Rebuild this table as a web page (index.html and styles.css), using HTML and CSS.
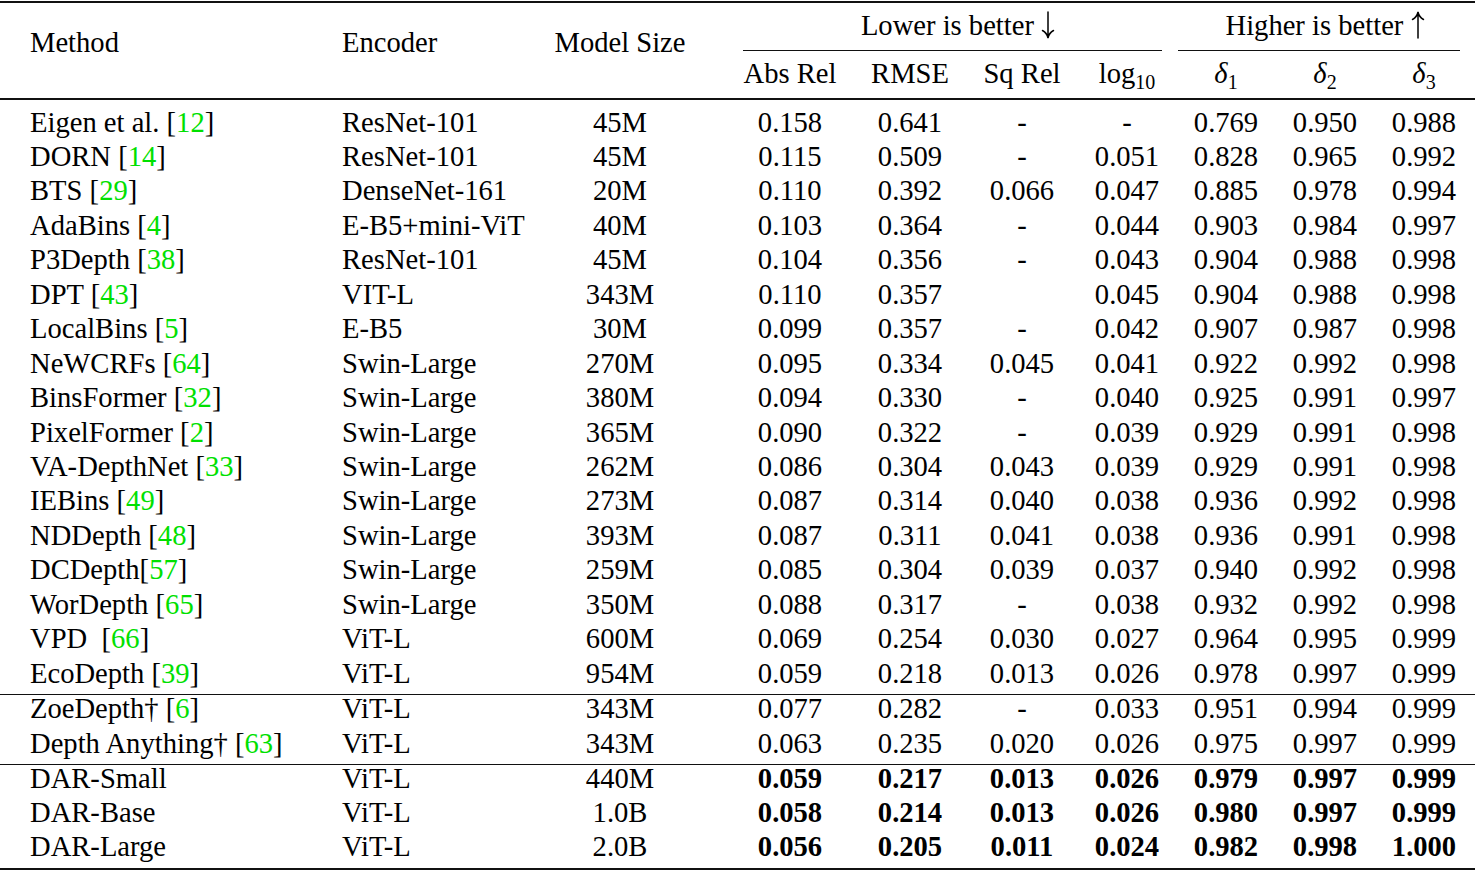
FILE: index.html
```html
<!DOCTYPE html>
<html>
<head>
<meta charset="utf-8">
<link rel="stylesheet" href="styles.css">
</head>
<body>
<div class="tbl">
  <div class="rule thick first"></div>
  <div class="head">
    <div class="hm c1">Method</div>
    <div class="hm c2">Encoder</div>
    <div class="hm c3">Model Size</div>
    <div class="grp lower">Lower is better <svg class="arrow" viewBox="0 0 14 28" width="14" height="28"><path d="M7 1V26.5M1.5 19.5Q6 22 7 27Q8 22 12.5 19.5"/></svg></div>
    <div class="cmid lower-rule"></div>
    <div class="grp higher">Higher is better <svg class="arrow" viewBox="0 0 14 28" width="14" height="28"><path d="M7 27V1.5M1.5 8.5Q6 6 7 1Q8 6 12.5 8.5"/></svg></div>
    <div class="cmid higher-rule"></div>
    <div class="sub s4">Abs Rel</div>
    <div class="sub s5">RMSE</div>
    <div class="sub s6">Sq Rel</div>
    <div class="sub s7">log<sub>10</sub></div>
    <div class="sub s8"><i>δ</i><sub>1</sub></div>
    <div class="sub s9"><i>δ</i><sub>2</sub></div>
    <div class="sub s10"><i>δ</i><sub>3</sub></div>
  </div>
  <div class="rule thick"></div>
  <div class="group g1">
    <div class="row"><div class="c1">Eigen et al. [<span class="cite">12</span>]</div><div class="c2">ResNet-101</div><div class="c3">45M</div><div class="n">0.158</div><div class="n">0.641</div><div class="n">-</div><div class="n">-</div><div class="n">0.769</div><div class="n">0.950</div><div class="n">0.988</div></div>
    <div class="row"><div class="c1">DORN [<span class="cite">14</span>]</div><div class="c2">ResNet-101</div><div class="c3">45M</div><div class="n">0.115</div><div class="n">0.509</div><div class="n">-</div><div class="n">0.051</div><div class="n">0.828</div><div class="n">0.965</div><div class="n">0.992</div></div>
    <div class="row"><div class="c1">BTS [<span class="cite">29</span>]</div><div class="c2">DenseNet-161</div><div class="c3">20M</div><div class="n">0.110</div><div class="n">0.392</div><div class="n">0.066</div><div class="n">0.047</div><div class="n">0.885</div><div class="n">0.978</div><div class="n">0.994</div></div>
    <div class="row"><div class="c1">AdaBins [<span class="cite">4</span>]</div><div class="c2">E-B5+mini-ViT</div><div class="c3">40M</div><div class="n">0.103</div><div class="n">0.364</div><div class="n">-</div><div class="n">0.044</div><div class="n">0.903</div><div class="n">0.984</div><div class="n">0.997</div></div>
    <div class="row"><div class="c1">P3Depth [<span class="cite">38</span>]</div><div class="c2">ResNet-101</div><div class="c3">45M</div><div class="n">0.104</div><div class="n">0.356</div><div class="n">-</div><div class="n">0.043</div><div class="n">0.904</div><div class="n">0.988</div><div class="n">0.998</div></div>
    <div class="row"><div class="c1">DPT [<span class="cite">43</span>]</div><div class="c2">VIT-L</div><div class="c3">343M</div><div class="n">0.110</div><div class="n">0.357</div><div class="n"></div><div class="n">0.045</div><div class="n">0.904</div><div class="n">0.988</div><div class="n">0.998</div></div>
    <div class="row"><div class="c1">LocalBins [<span class="cite">5</span>]</div><div class="c2">E-B5</div><div class="c3">30M</div><div class="n">0.099</div><div class="n">0.357</div><div class="n">-</div><div class="n">0.042</div><div class="n">0.907</div><div class="n">0.987</div><div class="n">0.998</div></div>
    <div class="row"><div class="c1">NeWCRFs [<span class="cite">64</span>]</div><div class="c2">Swin-Large</div><div class="c3">270M</div><div class="n">0.095</div><div class="n">0.334</div><div class="n">0.045</div><div class="n">0.041</div><div class="n">0.922</div><div class="n">0.992</div><div class="n">0.998</div></div>
    <div class="row"><div class="c1">BinsFormer [<span class="cite">32</span>]</div><div class="c2">Swin-Large</div><div class="c3">380M</div><div class="n">0.094</div><div class="n">0.330</div><div class="n">-</div><div class="n">0.040</div><div class="n">0.925</div><div class="n">0.991</div><div class="n">0.997</div></div>
    <div class="row"><div class="c1">PixelFormer [<span class="cite">2</span>]</div><div class="c2">Swin-Large</div><div class="c3">365M</div><div class="n">0.090</div><div class="n">0.322</div><div class="n">-</div><div class="n">0.039</div><div class="n">0.929</div><div class="n">0.991</div><div class="n">0.998</div></div>
    <div class="row"><div class="c1">VA-DepthNet [<span class="cite">33</span>]</div><div class="c2">Swin-Large</div><div class="c3">262M</div><div class="n">0.086</div><div class="n">0.304</div><div class="n">0.043</div><div class="n">0.039</div><div class="n">0.929</div><div class="n">0.991</div><div class="n">0.998</div></div>
    <div class="row"><div class="c1">IEBins [<span class="cite">49</span>]</div><div class="c2">Swin-Large</div><div class="c3">273M</div><div class="n">0.087</div><div class="n">0.314</div><div class="n">0.040</div><div class="n">0.038</div><div class="n">0.936</div><div class="n">0.992</div><div class="n">0.998</div></div>
    <div class="row"><div class="c1">NDDepth [<span class="cite">48</span>]</div><div class="c2">Swin-Large</div><div class="c3">393M</div><div class="n">0.087</div><div class="n">0.311</div><div class="n">0.041</div><div class="n">0.038</div><div class="n">0.936</div><div class="n">0.991</div><div class="n">0.998</div></div>
    <div class="row"><div class="c1">DCDepth[<span class="cite">57</span>]</div><div class="c2">Swin-Large</div><div class="c3">259M</div><div class="n">0.085</div><div class="n">0.304</div><div class="n">0.039</div><div class="n">0.037</div><div class="n">0.940</div><div class="n">0.992</div><div class="n">0.998</div></div>
    <div class="row"><div class="c1">WorDepth [<span class="cite">65</span>]</div><div class="c2">Swin-Large</div><div class="c3">350M</div><div class="n">0.088</div><div class="n">0.317</div><div class="n">-</div><div class="n">0.038</div><div class="n">0.932</div><div class="n">0.992</div><div class="n">0.998</div></div>
    <div class="row"><div class="c1">VPD &nbsp;[<span class="cite">66</span>]</div><div class="c2">ViT-L</div><div class="c3">600M</div><div class="n">0.069</div><div class="n">0.254</div><div class="n">0.030</div><div class="n">0.027</div><div class="n">0.964</div><div class="n">0.995</div><div class="n">0.999</div></div>
    <div class="row"><div class="c1">EcoDepth [<span class="cite">39</span>]</div><div class="c2">ViT-L</div><div class="c3">954M</div><div class="n">0.059</div><div class="n">0.218</div><div class="n">0.013</div><div class="n">0.026</div><div class="n">0.978</div><div class="n">0.997</div><div class="n">0.999</div></div>
  </div>
  <div class="rule mid r1"></div>
  <div class="group">
    <div class="row"><div class="c1">ZoeDepth† [<span class="cite">6</span>]</div><div class="c2">ViT-L</div><div class="c3">343M</div><div class="n">0.077</div><div class="n">0.282</div><div class="n">-</div><div class="n">0.033</div><div class="n">0.951</div><div class="n">0.994</div><div class="n">0.999</div></div>
    <div class="row"><div class="c1">Depth Anything† [<span class="cite">63</span>]</div><div class="c2">ViT-L</div><div class="c3">343M</div><div class="n">0.063</div><div class="n">0.235</div><div class="n">0.020</div><div class="n">0.026</div><div class="n">0.975</div><div class="n">0.997</div><div class="n">0.999</div></div>
  </div>
  <div class="rule mid r2"></div>
  <div class="group ours">
    <div class="row"><div class="c1">DAR-Small</div><div class="c2">ViT-L</div><div class="c3">440M</div><div class="n">0.059</div><div class="n">0.217</div><div class="n">0.013</div><div class="n">0.026</div><div class="n">0.979</div><div class="n">0.997</div><div class="n">0.999</div></div>
    <div class="row"><div class="c1">DAR-Base</div><div class="c2">ViT-L</div><div class="c3">1.0B</div><div class="n">0.058</div><div class="n">0.214</div><div class="n">0.013</div><div class="n">0.026</div><div class="n">0.980</div><div class="n">0.997</div><div class="n">0.999</div></div>
    <div class="row"><div class="c1">DAR-Large</div><div class="c2">ViT-L</div><div class="c3">2.0B</div><div class="n">0.056</div><div class="n">0.205</div><div class="n">0.011</div><div class="n">0.024</div><div class="n">0.982</div><div class="n">0.998</div><div class="n">1.000</div></div>
  </div>
  <div class="rule thick last"></div>
</div>
</body>
</html>
```

FILE: styles.css
```css
html, body {
  margin: 0;
  padding: 0;
  background: #ffffff;
}

body {
  font-family: "Liberation Serif", "Times New Roman", serif;
  font-size: 28.6px;
  color: #000;
}

.tbl {
  width: 1475px;
  padding-top: 1px;
}

.rule {
  background: #111;
}

.rule.thick {
  height: 2px;
}

.rule.mid {
  height: 1.3px;
}

.rule.r1 {
  margin-top: 2.5px;
  margin-bottom: -2.7px;
}

.rule.r2 {
  margin-top: 2.9px;
  margin-bottom: -3.7px;
}

.rule.last {
  margin-top: 3.1px;
}

.head,
.row {
  display: grid;
  grid-template-columns: 325px 215px 186px 128px 112px 112px 98px 100px 98px 100px;
}

.head {
  grid-template-rows: 47px 1px 47px;
  line-height: 34.4px;
}

.hm {
  grid-row: 1 / 4;
  align-self: start;
  padding-top: 22.6px;
  white-space: nowrap;
}

.c1 {
  padding-left: 30px;
  white-space: nowrap;
}

.c2 {
  padding-left: 17px;
  white-space: nowrap;
}

.c3 {
  text-align: center;
  padding-right: 26px;
  white-space: nowrap;
}

.head .c1 { grid-column: 1; }
.head .c2 { grid-column: 2; }
.head .c3 { grid-column: 3; }

.grp {
  grid-row: 1;
  align-self: center;
  text-align: center;
  white-space: nowrap;
}

.grp.lower {
  grid-column: 4 / 8;
  padding-left: 14px;
}

.grp.higher {
  grid-column: 8 / 11;
}

.arrow {
  vertical-align: -4px;
  fill: none;
  stroke: #000;
  stroke-width: 1.5;
  stroke-linecap: round;
}

.cmid {
  grid-row: 2;
  background: #111;
  height: 1px;
}

.lower-rule {
  grid-column: 4 / 8;
  margin-left: 17px;
  margin-right: 14px;
}

.higher-rule {
  grid-column: 8 / 11;
  margin-left: 2px;
  margin-right: 14px;
}

.sub {
  grid-row: 3;
  align-self: center;
  text-align: center;
  white-space: nowrap;
}

.s4 { grid-column: 4; }
.s5 { grid-column: 5; }
.s6 { grid-column: 6; }
.s7 { grid-column: 7; }
.s8 { grid-column: 8; }
.s9 { grid-column: 9; }
.s10 { grid-column: 10; }

sub {
  font-size: 0.7em;
  line-height: 0;
  vertical-align: -0.3em;
}

.group.g1 {
  padding-top: 5.6px;
}

.row {
  height: 34.44px;
  line-height: 34.44px;
}

.n {
  text-align: center;
  white-space: nowrap;
}

.cite {
  color: #00e000;
}

.ours .n {
  font-weight: bold;
}
```
